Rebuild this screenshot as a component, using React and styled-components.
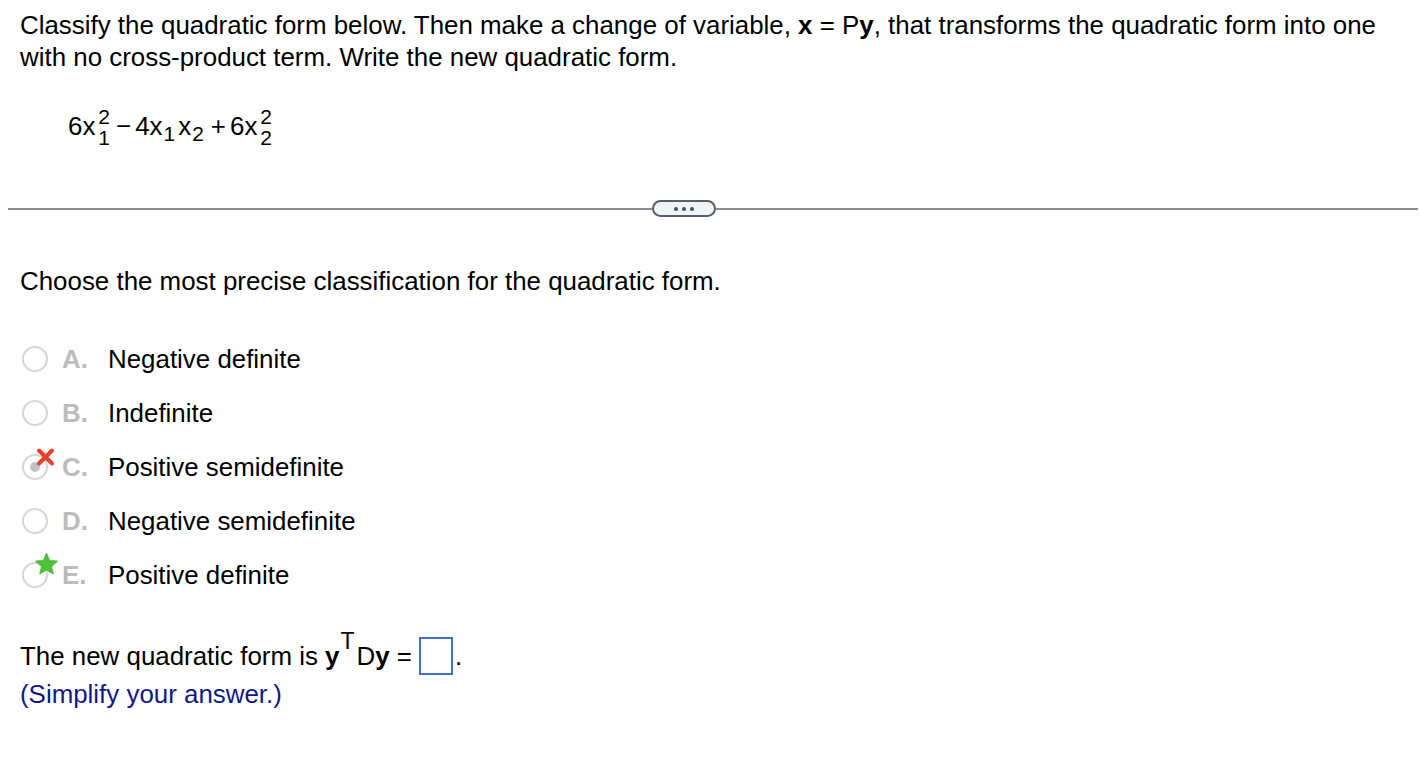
import React from 'react';
import styled, { createGlobalStyle } from 'styled-components';

const GlobalStyle = createGlobalStyle`
  body {
    margin: 0;
    background: #fff;
    font-family: "Liberation Sans", Arial, sans-serif;
    color: #000;
  }
`;

const Page = styled.div`
  width: 1420px;
  height: 776px;
  overflow: hidden;
  background: #fff;
  font-size: 25.9px;
`;

const Question = styled.div`
  padding: 9px 20px 0 20px;
`;

const Prompt = styled.p`
  margin: 0;
  line-height: 32px;
`;

const Formula = styled.div`
  margin: 33px 0 0 48px;
  height: 40px;
  display: flex;
  align-items: center;
`;

const Term = styled.span`
  display: inline-flex;
  align-items: center;
`;

const Scripts = styled.span`
  display: inline-flex;
  flex-direction: column;
  font-size: 21px;
  line-height: 21px;
  margin: 0 2px 0 3px;
  transform: translateY(1px);
`;

const Sub = styled.span`
  font-size: 21px;
  position: relative;
  top: 8px;
  margin: 0 3px 0 1px;
`;

const Op = styled.span`
  margin: 0 4px;
`;

const Divider = styled.div`
  margin: 54px 2px 0 8px;
  display: flex;
  align-items: center;
`;

const Rule = styled.div`
  flex: ${(p) => (p.left ? '0 0 644px' : '1')};
  height: 2px;
  background: #878c98;
`;

const MoreButton = styled.button`
  width: 64px;
  height: 17px;
  box-sizing: border-box;
  border: 2px solid #565e6c;
  border-radius: 9px;
  background: #f2f3f5;
  display: flex;
  align-items: center;
  justify-content: center;
  gap: 4px;
  padding: 0;
`;

const Dot = styled.span`
  width: 4px;
  height: 4px;
  border-radius: 50%;
  background: #4a5260;
`;

const Section = styled.div`
  padding: 0 20px;
`;

const SectionTitle = styled.p`
  margin: 48px 0 0 0;
  line-height: 32px;
`;

const Options = styled.div`
  margin-top: 46px;
  display: flex;
  flex-direction: column;
  gap: 22px;
`;

const Option = styled.div`
  display: flex;
  align-items: center;
  height: 32px;
`;

const RadioWrap = styled.span`
  position: relative;
  width: 26px;
  height: 26px;
  margin-left: 2px;
  flex-shrink: 0;
`;

const Radio = styled.span`
  display: block;
  box-sizing: border-box;
  width: 26px;
  height: 26px;
  border: 2px solid #d6d6d6;
  border-radius: 50%;
  background: #fff;
  position: relative;

  &::after {
    content: '';
    display: ${(p) => (p.checked ? 'block' : 'none')};
    position: absolute;
    left: 6px;
    top: 6px;
    width: 10px;
    height: 10px;
    border-radius: 50%;
    background: #c3c3c3;
  }
`;

const Mark = styled.svg`
  position: absolute;
  left: ${(p) => p.$x}px;
  top: ${(p) => p.$y}px;
`;

const Letter = styled.span`
  width: 46px;
  margin-left: 14px;
  color: #bcbcbc;
  font-weight: bold;
  flex-shrink: 0;
`;

const Label = styled.span``;

const Answer = styled.div`
  margin-top: 46px;
  display: flex;
  align-items: center;
  height: 38px;
`;

const Bold = styled.b`
  font-weight: bold;
`;

const Sup = styled.span`
  font-size: 23px;
  position: relative;
  top: -15px;
  margin: 0 2px 0 1px;
`;

const AnswerBox = styled.span`
  display: inline-block;
  width: 34px;
  height: 38px;
  border: 2px solid #3f6fc6;
  box-sizing: border-box;
  margin-left: 7px;
  margin-right: 2px;
`;

const Hint = styled.p`
  margin: 3px 0 0 0;
  color: #12178a;
  line-height: 32px;
`;

const CrossMark = () => (
  <Mark $x={13} $y={-7} width="21" height="20" viewBox="0 0 21 20">
    <path d="M4 3.5 L17 16.5 M17 3.5 L4 16.5" stroke="#e8402a" strokeWidth="4" strokeLinecap="round" />
  </Mark>
);

const StarMark = () => (
  <Mark $x={12} $y={-10} width="25" height="24" viewBox="0 0 24 24">
    <path
      d="M12 1.5 L15 8.6 L22.6 9.2 L16.8 14.2 L18.6 21.7 L12 17.7 L5.4 21.7 L7.2 14.2 L1.4 9.2 L9 8.6 Z"
      fill="#4fbf3c"
      stroke="#4fbf3c"
      strokeWidth="1.2"
      strokeLinejoin="round"
    />
  </Mark>
);

const options = [
  { letter: 'A.', label: 'Negative definite' },
  { letter: 'B.', label: 'Indefinite' },
  { letter: 'C.', label: 'Positive semidefinite', checked: true, mark: 'cross' },
  { letter: 'D.', label: 'Negative semidefinite' },
  { letter: 'E.', label: 'Positive definite', mark: 'star' },
];

const SquaredVar = ({ index }) => (
  <Term>
    <span>x</span>
    <Scripts>
      <span>2</span>
      <span>{index}</span>
    </Scripts>
  </Term>
);

export default function App() {
  return (
    <Page>
      <GlobalStyle />
      <Question>
        <Prompt>
          Classify the quadratic form below. Then make a change of variable, <Bold>x</Bold> = P<Bold>y</Bold>, that
          transforms the quadratic form into one
          <br />
          with no cross-product term. Write the new quadratic form.
        </Prompt>
        <Formula>
          6<SquaredVar index="1" />
          <Op>−</Op>4x<Sub>1</Sub>x<Sub>2</Sub>
          <Op>+</Op>6<SquaredVar index="2" />
        </Formula>
      </Question>

      <Divider>
        <Rule left />
        <MoreButton aria-label="more">
          <Dot />
          <Dot />
          <Dot />
        </MoreButton>
        <Rule />
      </Divider>

      <Section>
        <SectionTitle>Choose the most precise classification for the quadratic form.</SectionTitle>
        <Options>
          {options.map((o) => (
            <Option key={o.letter}>
              <RadioWrap>
                <Radio checked={o.checked} />
                {o.mark === 'cross' && <CrossMark />}
                {o.mark === 'star' && <StarMark />}
              </RadioWrap>
              <Letter>{o.letter}</Letter>
              <Label>{o.label}</Label>
            </Option>
          ))}
        </Options>

        <Answer>
          The new quadratic form is&nbsp;<Bold>y</Bold>
          <Sup>T</Sup>D<Bold>y</Bold>&nbsp;=
          <AnswerBox />.
        </Answer>
        <Hint>(Simplify your answer.)</Hint>
      </Section>
    </Page>
  );
}
